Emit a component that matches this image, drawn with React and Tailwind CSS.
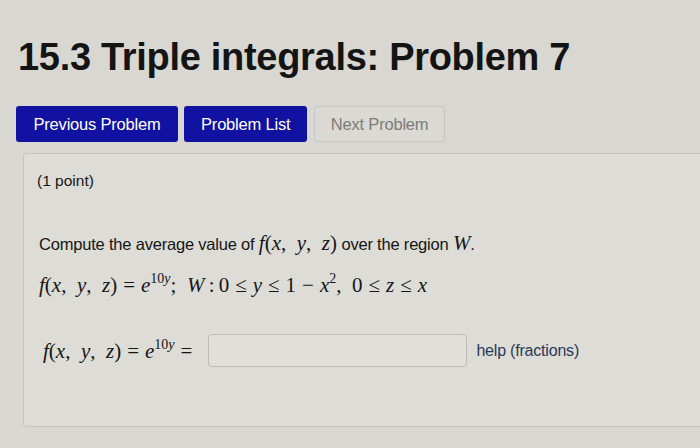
import React from 'react';

const sans = { fontFamily: '"Liberation Sans", Arial, sans-serif' };
const serif = { fontFamily: '"Liberation Serif", "Times New Roman", serif' };

const I = ({ children }) => <span className="italic">{children}</span>;

// f(x, y, z)
const Fxyz = () => (
  <>
    <I>f</I>(<I>x</I>,&ensp;<I>y</I>,&ensp;<I>z</I>)
  </>
);

const Exp = () => (
  <>
    <I>e</I>
    <sup className="text-[14px] -top-[9px]">
      10<I>y</I>
    </sup>
  </>
);

const Rel = ({ children }) => <span className="mx-[6px]">{children}</span>;

const App = () => {
  return (
    <div className="w-[700px] h-[448px] overflow-hidden bg-[#d8d7d1] text-[#161616]" style={sans}>
      <div className="pl-[18px] pt-[34px]">
        <h1 className="text-[38px] leading-[46px] font-bold tracking-[-0.3px] text-[#141414]">
          15.3 Triple integrals: Problem 7
        </h1>

        <div className="flex gap-[6px] mt-[26px] ml-[-2px]">
          <button className="h-[36px] px-[17.5px] rounded-[3px] bg-[#1111a2] text-white text-[16.5px] tracking-[-0.2px]">
            Previous Problem
          </button>
          <button className="h-[36px] px-[17px] rounded-[3px] bg-[#1111a2] text-white text-[16.5px] tracking-[-0.2px]">
            Problem List
          </button>
          <button className="h-[36px] px-[15.5px] rounded-[3px] border border-[#c6c5bf] bg-[#dad9d3] text-[#7c7c7a] text-[16.5px] tracking-[-0.2px] ml-[1px]">
            Next Problem
          </button>
        </div>

        {/* problem box */}
        <div className="mt-[11px] ml-[5px] w-[720px] h-[274px] border border-[#c4c3bd] rounded-[3px] bg-[#dddcd6] pl-[13px] pt-[17px]">
          <p className="text-[15.5px] leading-[20px]">(1 point)</p>

          <p className="text-[16.5px] leading-[22px] mt-[41px] ml-[2px] tracking-[-0.2px]">
            Compute the average value of{' '}
            <span className="text-[21px] tracking-normal" style={serif}>
              <Fxyz />
            </span>{' '}
            over the region{' '}
            <span className="text-[21px]" style={serif}>
              <I>W</I>
            </span>
            .
          </p>

          <p className="text-[21px] leading-[24px] mt-[18px] ml-[2px] whitespace-nowrap" style={serif}>
            <Fxyz />
            <Rel>=</Rel>
            <Exp />;&ensp;<I>W</I>&thinsp;:&thinsp;0<Rel>≤</Rel>
            <I>y</I>
            <Rel>≤</Rel>1<Rel>−</Rel>
            <I>x</I>
            <sup className="text-[14px] -top-[9px]">2</sup>,&ensp;0<Rel>≤</Rel>
            <I>z</I>
            <Rel>≤</Rel>
            <I>x</I>
          </p>

          <div className="flex items-center mt-[37px] ml-[6px]">
            <span className="text-[21px] leading-[24px] whitespace-nowrap" style={serif}>
              <Fxyz />
              <Rel>=</Rel>
              <Exp />
              <Rel>=</Rel>
            </span>
            <div className="ml-[10px] w-[259px] h-[33px] rounded-[4px] border border-[#bcbbb5] bg-[#e0dfd9]" />
            <a className="ml-[9px] text-[16px] text-[#283a5c] tracking-[-0.2px]">help (fractions)</a>
          </div>
        </div>
      </div>
    </div>
  );
};

export default App;
